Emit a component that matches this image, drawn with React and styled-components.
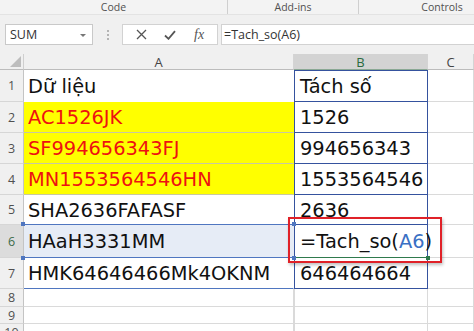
import React from "react";
import styled, { createGlobalStyle } from "styled-components";

const Global = createGlobalStyle`
  html, body { margin: 0; padding: 0; background: #fff; overflow: hidden; }
  body { width: 474px; height: 331px; font-family: "Open Sans", "Liberation Sans", sans-serif; }
  * { box-sizing: border-box; }
`;

const Ribbon = styled.div`
  display: flex;
  height: 15px;
  background: #f3f3f3;
  border-bottom: 1px solid #e3e3e3;
  overflow: hidden;
`;
const Group = styled.div`
  flex: 0 0 ${p => p.$w}px;
  display: flex;
  align-items: center;
  justify-content: center;
  font-size: 10.5px;
  color: #505050;
  border-right: ${p => (p.$sep ? "1px solid #cfcfcf" : "none")};
  height: 14px;
  line-height: 1;
`;

const FormulaBar = styled.div`
  display: flex;
  align-items: center;
  height: 39px;
  padding: 8px 0 8px 5px;
  background: #f0f0f0;
`;
const NameBox = styled.div`
  position: relative;
  width: 88px;
  height: 21px;
  background: #fff;
  border: 1px solid #c9c9c9;
  display: flex;
  align-items: center;
  padding-left: 4px;
  font-size: 12.5px;
  color: #333;
`;
const Caret = styled.span`
  position: absolute;
  right: 6px;
  top: 9px;
  width: 0;
  height: 0;
  border-left: 3px solid transparent;
  border-right: 3px solid transparent;
  border-top: 3px solid #777;
`;
const Dots = styled.div`
  width: 29px;
  display: flex;
  flex-direction: column;
  align-items: center;
  gap: 2px;
  span { width: 2px; height: 2px; background: #a0a0a0; border-radius: 1px; }
`;
const Buttons = styled.div`
  width: 96px;
  height: 21px;
  background: #fff;
  border: 1px solid #d2d2d2;
  display: flex;
  align-items: center;
  justify-content: space-around;
  padding: 0 4px;
`;
const Fx = styled.span`
  font-family: "Liberation Serif", serif;
  font-style: italic;
  font-size: 14px;
  color: #555;
  line-height: 1;
`;
const Input = styled.div`
  flex: 1;
  height: 21px;
  margin-left: 3px;
  background: #fff;
  border: 1px solid #d2d2d2;
  border-right: none;
  display: flex;
  align-items: center;
  padding-left: 2px;
  font-size: 12.5px;
  color: #333;
`;

const Gap = styled.div`
  height: 0px;
  background: #f0f0f0;
`;

const Sheet = styled.div`
  display: flex;
  flex-direction: column;
`;
const Row = styled.div`
  display: flex;
  height: ${p => p.$h}px;
`;
const Corner = styled.div`
  position: relative;
  width: 24px;
  background: #f0f0f0;
  border-right: 1px solid #cfcfcf;
  border-bottom: 1px solid #bcbcbc;
  &::after {
    content: "";
    position: absolute;
    right: 2px;
    bottom: 2px;
    width: 0;
    height: 0;
    border-left: 11px solid transparent;
    border-bottom: 11px solid #bdbdbd;
  }
`;
const ColHead = styled.div`
  width: ${p => p.$w}px;
  flex: ${p => (p.$w ? "none" : 1)};
  background: ${p => (p.$sel ? "#d3d3d3" : "#f0f0f0")};
  color: ${p => (p.$sel ? "#2b6a40" : "#444")};
  border-right: 1px solid #d4d4d4;
  border-bottom: 1px solid ${p => (p.$sel ? "#8aa894" : "#bcbcbc")};
  display: flex;
  align-items: center;
  justify-content: center;
  font-size: 13px;
  line-height: 1;
  padding-top: 1px;
`;
const RowHead = styled.div`
  width: 24px;
  flex: none;
  background: ${p => (p.$sel ? "#dcdcdc" : "#f0f0f0")};
  color: ${p => (p.$sel ? "#3d6b4a" : "#505050")};
  border-right: 1px solid #c4c4c4;
  border-bottom: 1px solid #d6d6d6;
  display: flex;
  align-items: center;
  justify-content: center;
  font-size: 12.5px;
  line-height: 1;
  padding-top: 2px;
`;
const Cell = styled.div`
  position: relative;
  width: ${p => p.$w}px;
  flex: ${p => (p.$w ? "none" : 1)};
  display: flex;
  align-items: center;
  white-space: nowrap;
  font-family: "DejaVu Sans", sans-serif;
  font-size: 19.4px;
  line-height: 1;
  padding: 2px 0 0 ${p => p.$pl || 4}px;
  color: ${p => (p.$red ? "#ee1111" : "#111")};
  background: ${p => p.$bg || "transparent"};
  border-bottom: 1px solid ${p => p.$bb || "#dadada"};
  border-right: 1px solid ${p => p.$br || "#dadada"};
  border-top: ${p => (p.$bt ? `1px solid ${p.$bt}` : "none")};
  border-left: ${p => (p.$bl ? `1px solid ${p.$bl}` : "none")};
`;
const Ref = styled.span`
  color: #3a70c4;
`;
const RedBox = styled.div`
  position: absolute;
  top: -8px;
  left: -7px;
  right: -15px;
  bottom: -6px;
  border: 2.5px solid #e02128;
  box-shadow: 1px 2px 3px rgba(0, 0, 0, 0.25);
  z-index: 3;
  pointer-events: none;
`;
const Handle = styled.span`
  position: absolute;
  width: 4px;
  height: 4px;
  background: ${p => p.$c};
  z-index: 2;
  ${p => (p.$top ? "top: -3px;" : "bottom: -3px;")}
  ${p => (p.$left ? "left: -3px;" : "right: -3px;")}
`;

const BLUE = "#35529e";

const XIcon = () => (
  <svg width="11" height="11" viewBox="0 0 11 11">
    <path d="M1 1 L10 10 M10 1 L1 10" stroke="#555" strokeWidth="1.3" fill="none" />
  </svg>
);
const Check = () => (
  <svg width="12" height="10" viewBox="0 0 12 10">
    <path d="M1 5.5 L4.5 8.8 L11 1.2" stroke="#555" strokeWidth="1.8" fill="none" />
  </svg>
);

const data = [
  { n: 1, h: 32, a: "Dữ liệu", b: "Tách số" },
  { n: 2, h: 31, a: "AC1526JK", b: "1526", y: true },
  { n: 3, h: 31, a: "SF994656343FJ", b: "994656343", y: true },
  { n: 4, h: 31, a: "MN1553564546HN", b: "1553564546", y: true },
  { n: 5, h: 30, a: "SHA2636FAFASF", b: "2636" },
  { n: 6, h: 33, a: "HAaH3331MM", f: true },
  { n: 7, h: 31, a: "HMK64646466Mk4OKNM", b: "646464664" },
];

export default function App() {
  return (
    <>
      <Global />
      <Ribbon>
        <Group $w={228} $sep>Code</Group>
        <Group $w={131} $sep>Add-ins</Group>
        <Group $w={166}>Controls</Group>
      </Ribbon>
      <FormulaBar>
        <NameBox>
          SUM
          <Caret />
        </NameBox>
        <Dots>
          <span />
          <span />
          <span />
        </Dots>
        <Buttons>
          <XIcon />
          <Check />
          <Fx>fx</Fx>
        </Buttons>
        <Input>=Tach_so(A6)</Input>
      </FormulaBar>
      <Gap />
      <Sheet>
        <Row $h={16}>
          <Corner />
          <ColHead $w={270}>A</ColHead>
          <ColHead $w={134} $sel>B</ColHead>
          <ColHead>C</ColHead>
        </Row>
        {data.map(r => {
          const sel = r.n === 6;
          return (
            <Row key={r.n} $h={r.h}>
              <RowHead $sel={sel}>{r.n}</RowHead>
              <Cell
                $w={270}
                $red={r.y}
                $bg={r.y ? "#ffff00" : sel ? "#e6ecf6" : undefined}
                $br="transparent"
                $bb={sel || r.n === 5 || r.n === 7 ? "#4f76c0" : r.y ? "#c8c8a0" : r.n === 1 ? "transparent" : "#dadada"}
              >
                {r.a}
                {sel && (
                  <>
                    <Handle $c="#4f76c0" $top $left />
                    <Handle $c="#4f76c0" $left />
                  </>
                )}
              </Cell>
              <Cell
                $w={134}
                $pl={5}
                $bl={BLUE}
                $br={BLUE}
                $bb={sel ? "#2f7a4d" : BLUE}
                $bt={r.n === 1 ? BLUE : undefined}
              >
                {r.f ? (
                  <>
                    =Tach_so(<Ref>A6</Ref>)
                    <Handle $c="#4f76c0" $top $left />
                    <Handle $c="#4f76c0" $left />
                    <Handle $c="#2f7a4d" />
                    <RedBox />
                  </>
                ) : (
                  r.b
                )}
              </Cell>
              <Cell />
            </Row>
          );
        })}
        {[8, 9, 10].map(n => (
          <Row key={n} $h={n === 8 ? 18 : 17}>
            <RowHead>{n}</RowHead>
            <Cell $w={270} />
            <Cell $w={134} $bl="#dadada" />
            <Cell />
          </Row>
        ))}
      </Sheet>
    </>
  );
}
